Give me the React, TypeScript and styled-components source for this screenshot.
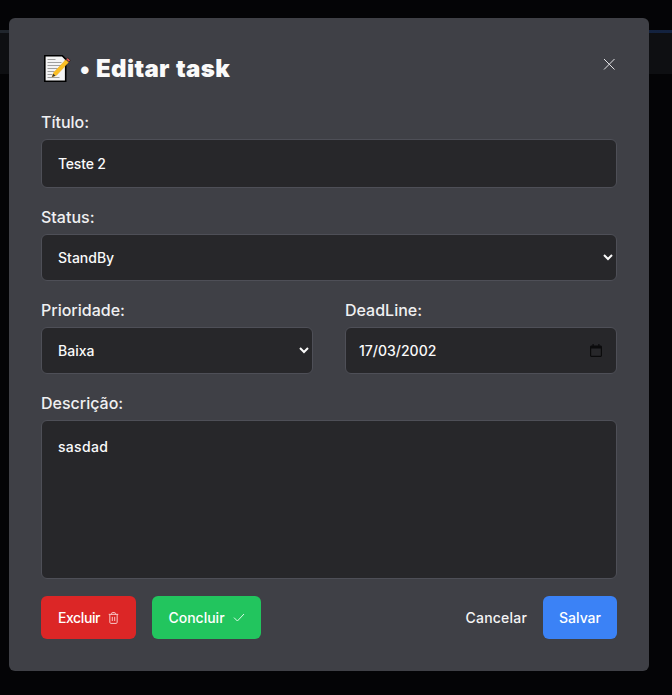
import React from "react";
import styled, { createGlobalStyle } from "styled-components";

const Global = createGlobalStyle`
  html, body { margin: 0; padding: 0; background: #040406; }
  * { box-sizing: border-box; }
  body { font-family: Inter, "Noto Sans", sans-serif; color: #fafafa; }
`;

const Page = styled.div`
  position: relative;
  width: 672px;
  height: 695px;
  overflow: hidden;
  background: #040406;
  padding: 18px 23px 24px 9px;
`;

const AppHeader = styled.div`
  position: absolute;
  left: 0;
  right: 0;
  top: 30px;
  height: 44px;
  background: #0e0f12;
  &::before {
    content: "";
    display: block;
    height: 3px;
    background: linear-gradient(90deg, #20252c 0%, #13223f 100%);
  }
`;

const Modal = styled.form`
  position: relative;
  width: 640px;
  height: 653px;
  background: #3f4046;
  border-radius: 6px;
  padding: 32px;
  display: flex;
  flex-direction: column;
`;

const TitleRow = styled.div`
  display: flex;
  align-items: center;
  gap: 9px;
  height: 36px;
  margin-bottom: 24px;
  padding-left: 3px;
`;

const Title = styled.h2`
  margin: 0;
  font-size: 24px;
  font-weight: 900;
  letter-spacing: 0.35px;
  word-spacing: 1px;
  color: #fafafa;
`;

const CloseButton = styled.button`
  position: absolute;
  top: 39px;
  right: 33px;
  width: 14px;
  height: 14px;
  padding: 0;
  border: 0;
  background: none;
  color: #e4e4e7;
  display: flex;
`;

const Field = styled.label`
  display: flex;
  flex-direction: column;
  margin-bottom: 17px;
  min-width: 0;
`;

const LabelText = styled.span`
  font-size: 16px;
  font-weight: 500;
  line-height: 24px;
  height: 24px;
  margin-bottom: 5px;
  color: #f0f0f2;
`;

const controlBase = `
  width: 100%;
  background: #27272a;
  border: 1px solid #4e4f57;
  border-radius: 6px;
  color: #fafafa;
  font-family: Inter, "Noto Sans", sans-serif;
  font-size: 14px;
  font-weight: 500;
  outline: none;
`;

const Input = styled.input`
  ${controlBase}
  height: 49px;
  padding: 0 16px;
  letter-spacing: -0.2px;
`;

const Select = styled.select`
  ${controlBase}
  height: 47px;
  padding: 0 12px;
`;

const DateBox = styled.div`
  ${controlBase}
  height: 47px;
  display: flex;
  align-items: center;
  justify-content: space-between;
  padding: 0 14px 0 13px;
`;

const TwoColumns = styled.div`
  display: grid;
  grid-template-columns: 1fr 1fr;
  column-gap: 32px;
`;

const TextArea = styled.textarea`
  ${controlBase}
  height: 159px;
  padding: 16px;
  line-height: 20px;
  letter-spacing: 0.3px;
  resize: none;
  display: block;
`;

const Actions = styled.div`
  display: flex;
  align-items: center;
  justify-content: space-between;
`;

const ButtonGroup = styled.div`
  display: flex;
  align-items: center;
  gap: 16px;
`;

const ActionButton = styled.button<{ $bg: string; $w: number; $spacing?: number }>`
  height: 43px;
  width: ${(p) => p.$w}px;
  border: 0;
  border-radius: 6px;
  background: ${(p) => p.$bg};
  color: #fff;
  font-family: Inter, "Noto Sans", sans-serif;
  font-size: 14px;
  font-weight: 500;
  letter-spacing: ${(p) => p.$spacing ?? 0}px;
  display: flex;
  align-items: center;
  justify-content: center;
  gap: 8px;
  padding: 0 0 0 0;
`;

const GhostButton = styled.button`
  border: 0;
  background: none;
  padding: 0;
  color: #f4f4f5;
  font-family: Inter, "Noto Sans", sans-serif;
  font-size: 14px;
  font-weight: 500;
  letter-spacing: 0.2px;
`;

const Memo = () => (
  <svg width="27" height="27" viewBox="0 0 27 27" aria-hidden="true">
    <path d="M.8.8h17.500l3.400 3.400v22H.8z" fill="#f4f4f4" stroke="#000" strokeWidth="1.6" />
    <path d="M3.500 4.500h8M3.500 7.500h14M3.500 10.500h14M3.500 13.500h10M3.500 16.500h7M3.500 19.500h5M3.500 22.500h12" stroke="#a0a0a0" strokeWidth="1" />
    <path d="M8 22l1.800-4.500L22 4.500l2.800 2.600L12.500 20.300z" fill="#fbbf24" stroke="#e8a317" strokeWidth=".5" />
    <path d="M22 4.500l1.700-1.800 2.800 2.600-1.700 1.800z" fill="#d9534f" stroke="#222" strokeWidth=".8" />
    <path d="M8 22l1.300-3.300 2.200 2z" fill="#333" />
  </svg>
);

const CloseIcon = () => (
  <svg width="14" height="14" viewBox="0 0 14 14" fill="none" stroke="currentColor" strokeWidth="1" aria-hidden="true">
    <path d="M2 2l10.500 10.500M12.500 2L2 12.500" />
  </svg>
);

const Trash = () => (
  <svg width="11" height="12" viewBox="0 0 12 13" fill="none" stroke="#fbd5d5" strokeWidth="1" aria-hidden="true">
    <path d="M.8 2.500h10.400M2 2.500v8.700c0 .7.500 1.200 1.200 1.200h5.600c.7 0 1.200-.5 1.200-1.200V2.500M4 2.500V1.300c0-.4.3-.7.7-.7h2.600c.4 0 .7.300.7.7v1.200M4.700 5.200v4.600M7.300 5.200v4.600" />
  </svg>
);

const Check = () => (
  <svg width="12" height="9" viewBox="0 0 12 9" fill="none" stroke="#dcfce7" strokeWidth="1" aria-hidden="true">
    <path d="M1 4.600l3.400 3.400L11 1" />
  </svg>
);

const Calendar = () => (
  <svg width="12" height="13" viewBox="0 0 12 13" aria-hidden="true">
    <path d="M2.500 0h1.200v1.500h4.600V0h1.200v1.500h1c.7 0 1.500.6 1.500 1.400v8.600c0 .8-.8 1.500-1.500 1.500h-9C.8 13 0 12.300 0 11.500V2.900c0-.8.8-1.400 1.500-1.400h1zM1.200 4.500v7.300h9.600V4.500z" fill="#0b0b0c" />
  </svg>
);

export default function App() {
  return (
    <>
      <Global />
      <Page>
        <AppHeader />
        <Modal onSubmit={(e) => e.preventDefault()}>
          <TitleRow>
            <Memo />
            <Title>• Editar task</Title>
          </TitleRow>
          <CloseButton type="button" aria-label="Fechar"><CloseIcon /></CloseButton>
          <Field>
            <LabelText>Título:</LabelText>
            <Input defaultValue="Teste 2" />
          </Field>
          <Field>
            <LabelText>Status:</LabelText>
            <Select defaultValue="StandBy">
              <option>StandBy</option>
              <option>Em andamento</option>
              <option>Concluído</option>
            </Select>
          </Field>
          <TwoColumns>
            <Field>
              <LabelText>Prioridade:</LabelText>
              <Select defaultValue="Baixa">
                <option>Baixa</option>
                <option>Média</option>
                <option>Alta</option>
              </Select>
            </Field>
            <Field>
              <LabelText>DeadLine:</LabelText>
              <DateBox>
                <span>17/03/2002</span>
                <Calendar />
              </DateBox>
            </Field>
          </TwoColumns>
          <Field>
            <LabelText>Descrição:</LabelText>
            <TextArea defaultValue="sasdad" />
          </Field>
          <Actions>
            <ButtonGroup>
              <ActionButton type="button" $bg="#dc2626" $w={95} $spacing={-0.4}>Excluir <Trash /></ActionButton>
              <ActionButton type="button" $bg="#22c55e" $w={109}>Concluir <Check /></ActionButton>
            </ButtonGroup>
            <ButtonGroup>
              <GhostButton type="button">Cancelar</GhostButton>
              <ActionButton type="submit" $bg="#3b82f6" $w={74}>Salvar</ActionButton>
            </ButtonGroup>
          </Actions>
        </Modal>
      </Page>
    </>
  );
}
